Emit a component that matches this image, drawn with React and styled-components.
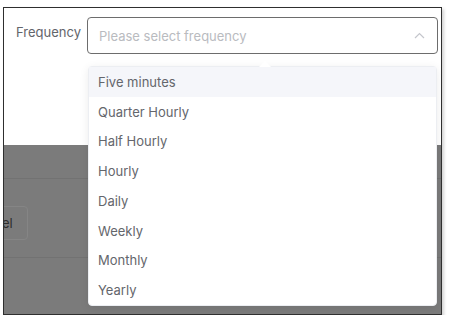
import styled, { createGlobalStyle } from "styled-components";

const GlobalStyle = createGlobalStyle`
  html, body {
    margin: 0;
    padding: 0;
    background: #ffffff;
    font-family: "Inter", "Liberation Sans", sans-serif;
  }
`;

const Frame = styled.div`
  position: relative;
  margin: 7px 0 0 3px;
  width: 437px;
  height: 306px;
  border: 1px solid #2f2f2f;
  box-shadow: 2px 2px 3px rgba(0, 0, 0, 0.18);
  background: #ffffff;
  overflow: hidden;
`;

const FormPanel = styled.div`
  height: 137px;
  box-sizing: border-box;
  padding: 9px 3px 0 12px;
  background: #ffffff;
`;

const FormRow = styled.div`
  display: flex;
  align-items: flex-start;
`;

const Label = styled.label`
  width: 71px;
  padding-top: 7px;
  font-size: 13px;
  line-height: 16px;
  color: #63656b;
`;

const SelectBox = styled.div`
  flex: 1;
  height: 37px;
  box-sizing: border-box;
  display: flex;
  align-items: center;
  justify-content: space-between;
  padding: 0 12px 0 11px;
  border: 1px solid #6d6d6d;
  border-radius: 4px;
  background: #ffffff;
`;

const Placeholder = styled.span`
  font-size: 13px;
  color: #b9bbc0;
`;

const Overlay = styled.div`
  height: 169px;
  background: #7b7b7b;
  display: flex;
  flex-direction: column;
`;

const Divider = styled.div`
  height: 1px;
  background: #727272;
  margin-top: ${(p) => p.$top}px;
`;

const Footer = styled.div`
  display: flex;
  margin-top: 27px;
`;

const GhostButton = styled.div`
  margin-left: -47px;
  height: 34px;
  box-sizing: border-box;
  display: flex;
  align-items: center;
  padding: 0 14px 0 12px;
  border: 1px solid #858585;
  border-radius: 4px;
  font-size: 13px;
  color: #2e2e2e;
`;

const Dropdown = styled.ul`
  position: absolute;
  left: 84px;
  top: 58px;
  width: 349px;
  box-sizing: border-box;
  margin: 0;
  padding: 0;
  list-style: none;
  background: #ffffff;
  border: 1px solid #eceef2;
  border-radius: 4px;
  box-shadow: 0 2px 10px rgba(0, 0, 0, 0.08);

  &::before {
    content: "";
    position: absolute;
    top: -6px;
    left: 170px;
    border-left: 6px solid transparent;
    border-right: 6px solid transparent;
    border-bottom: 6px solid #ffffff;
  }
`;

const Option = styled.li`
  height: 29.75px;
  display: flex;
  align-items: center;
  padding: 0 9px;
  font-size: 13px;
  color: #64666c;
  background: ${(p) => (p.$active ? "#f5f6fa" : "transparent")};
`;

const options = [
  "Five minutes",
  "Quarter Hourly",
  "Half Hourly",
  "Hourly",
  "Daily",
  "Weekly",
  "Monthly",
  "Yearly",
];

function Chevron() {
  return (
    <svg width="11" height="7" viewBox="0 0 11 7" fill="none">
      <path d="M1 6 L5.5 1.5 L10 6" stroke="#c4c6cc" strokeWidth="1.2" />
    </svg>
  );
}

export default function App() {
  return (
    <>
      <GlobalStyle />
      <Frame>
        <FormPanel>
          <FormRow>
            <Label>Frequency</Label>
            <SelectBox>
              <Placeholder>Please select frequency</Placeholder>
              <Chevron />
            </SelectBox>
          </FormRow>
        </FormPanel>
        <Overlay>
          <Divider $top={33} />
          <Footer>
            <GhostButton>Cancel</GhostButton>
          </Footer>
          <Divider $top={17} />
        </Overlay>
        <Dropdown>
          {options.map((o, i) => (
            <Option key={o} $active={i === 0}>
              {o}
            </Option>
          ))}
        </Dropdown>
      </Frame>
    </>
  );
}
